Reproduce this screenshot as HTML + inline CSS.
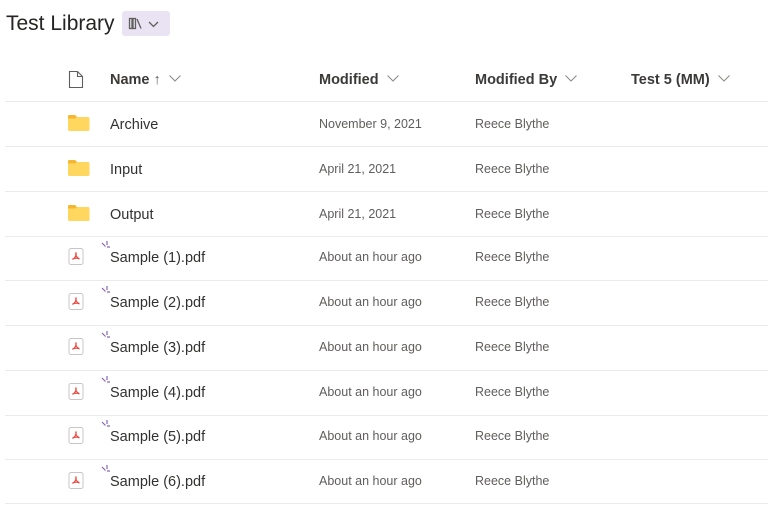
<!DOCTYPE html>
<html><head><style>
body{margin:0;width:768px;height:509px;background:#fff;font-family:"Liberation Sans",sans-serif;position:relative;overflow:hidden;color:#323130}
.a{position:absolute;white-space:nowrap}
.t{font-size:21px;color:#252423;left:6px;top:12px}
.h{font-size:14.5px;font-weight:bold;color:#3b3a39;top:72px}
.ln{position:absolute;left:5px;right:0;height:1px;background:#edebe9}
.nm{font-size:14.5px;color:#323130;left:110px}
.sm{font-size:12.5px;color:#605e5c}
.chev{display:inline-block;margin-left:8px;position:relative;top:-2px}
</style></head><body>
<div class="a t">Test Library</div>
<div class="a" style="left:122px;top:11px;width:48px;height:25px;background:#e9e3f4;border-radius:3px">
<svg width="48" height="25" style="position:absolute;left:0;top:0"><g fill="none" stroke="#605e5c" stroke-width="1.3"><rect x="7.5" y="7.5" width="2.5" height="10"/><rect x="11" y="7.5" width="2.5" height="10"/><path d="M15 8l4 9.5"/><path d="M27 11l4.5 4.5 4.5-4.5"/></g></svg></div>
<svg class="a" style="left:68px;top:70px" width="16" height="19"><path d="M1.5 1.5h8l5 5v11h-13z M9.5 1.5v5h5" fill="none" stroke="#605e5c" stroke-width="1.1"/></svg>
<div class="a h" style="left:110px">Name <span style="font-weight:normal;color:#605e5c">↑</span><svg class="chev" width="12" height="7"><path d="M0.5 0.5l5.5 5.5 5.5-5.5" fill="none" stroke="#8a8886"/></svg></div>
<div class="a h" style="left:319px">Modified<svg class="chev" width="12" height="7"><path d="M0.5 0.5l5.5 5.5 5.5-5.5" fill="none" stroke="#8a8886"/></svg></div>
<div class="a h" style="left:475px">Modified By<svg class="chev" width="12" height="7"><path d="M0.5 0.5l5.5 5.5 5.5-5.5" fill="none" stroke="#8a8886"/></svg></div>
<div class="a h" style="left:631px">Test 5 (MM)<svg class="chev" width="12" height="7"><path d="M0.5 0.5l5.5 5.5 5.5-5.5" fill="none" stroke="#8a8886"/></svg></div>
<div class="ln" style="top:101px"></div>
<div class="ln" style="top:146px"></div>
<div class="ln" style="top:191px"></div>
<div class="ln" style="top:236px"></div>
<div class="ln" style="top:280px"></div>
<div class="ln" style="top:325px"></div>
<div class="ln" style="top:370px"></div>
<div class="ln" style="top:415px"></div>
<div class="ln" style="top:459px"></div>
<div class="ln" style="top:503px"></div>

<div id="rows"></div>
<svg class="a" style="left:68px;top:114px" width="22" height="18"><path d="M0 2.5a1.5 1.5 0 0 1 1.5-1.5h5.5l2 2h11a1.5 1.5 0 0 1 1.5 1.5v11a1.5 1.5 0 0 1-1.5 1.5h-18.5a1.5 1.5 0 0 1-1.5-1.5z" fill="#ffd75e"/><path d="M0 2.5a1.5 1.5 0 0 1 1.5-1.5h5.5l2 2-2 1.5h-7z" fill="#f5b731"/></svg>
<svg class="a" style="left:68px;top:159px" width="22" height="18"><path d="M0 2.5a1.5 1.5 0 0 1 1.5-1.5h5.5l2 2h11a1.5 1.5 0 0 1 1.5 1.5v11a1.5 1.5 0 0 1-1.5 1.5h-18.5a1.5 1.5 0 0 1-1.5-1.5z" fill="#ffd75e"/><path d="M0 2.5a1.5 1.5 0 0 1 1.5-1.5h5.5l2 2-2 1.5h-7z" fill="#f5b731"/></svg>
<svg class="a" style="left:68px;top:204px" width="22" height="18"><path d="M0 2.5a1.5 1.5 0 0 1 1.5-1.5h5.5l2 2h11a1.5 1.5 0 0 1 1.5 1.5v11a1.5 1.5 0 0 1-1.5 1.5h-18.5a1.5 1.5 0 0 1-1.5-1.5z" fill="#ffd75e"/><path d="M0 2.5a1.5 1.5 0 0 1 1.5-1.5h5.5l2 2-2 1.5h-7z" fill="#f5b731"/></svg>
<div class="a nm" style="top:117px">Archive</div>
<div class="a nm" style="top:162px">Input</div>
<div class="a nm" style="top:207px">Output</div>
<div class="a sm" style="left:319px;top:117px">November 9, 2021</div>
<div class="a sm" style="left:319px;top:162px">April 21, 2021</div>
<div class="a sm" style="left:319px;top:207px">April 21, 2021</div>
<div class="a sm" style="left:475px;top:117px">Reece Blythe</div>
<div class="a sm" style="left:475px;top:162px">Reece Blythe</div>
<div class="a sm" style="left:475px;top:207px">Reece Blythe</div>

<script>
var tops=[257,302,347,392,436,481],h='';
tops.forEach(function(c,i){
h+='<svg class="a" style="left:68px;top:'+(c-9)+'px" width="16" height="18"><rect x="1" y="0.5" width="14" height="16" rx="2" fill="#fff" stroke="#c8c6c4"/><path d="M8 4.5c-1 3 1 5 3.5 6.5M8 4.5c0.5 3-1 5.5-3.5 7M4.5 11c2-1 5-1.2 7 0" fill="none" stroke="#e8453c" stroke-width="1.2"/></svg>';
h+='<svg class="a" style="left:100px;top:'+(c-17)+'px" width="12" height="12"><path d="M7 1v4M2 3l3.5 3.5M10 7h-3" stroke="#8764b8" stroke-width="1.2" fill="none"/></svg>';
h+='<div class="a nm" style="top:'+(c-7)+'px">Sample ('+(i+1)+').pdf</div>';
h+='<div class="a sm" style="left:319px;top:'+(c-7)+'px">About an hour ago</div>';
h+='<div class="a sm" style="left:475px;top:'+(c-7)+'px">Reece Blythe</div>';
});
document.getElementById('rows').outerHTML=h;
</script>
</body></html>
